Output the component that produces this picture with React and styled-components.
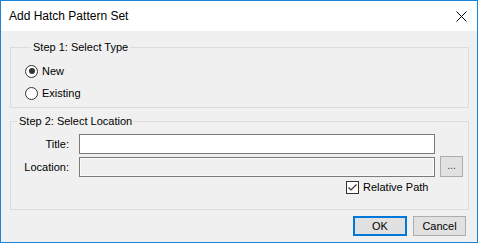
import React from "react";
import styled, { createGlobalStyle } from "styled-components";

const Global = createGlobalStyle`
  html, body { margin: 0; padding: 0; background: #ffffff; }
  * { box-sizing: border-box; }
`;

const Window = styled.div`
  width: 478px;
  height: 243px;
  border: 1px solid #1a84d8;
  background: #f0f0f0;
  display: flex;
  flex-direction: column;
  font-family: "Liberation Sans", Arial, sans-serif;
  font-size: 11px;
  color: #000;
`;

const TitleBar = styled.div`
  height: 30px;
  flex: none;
  background: #ffffff;
  display: flex;
  align-items: center;
  justify-content: space-between;
  padding: 0 10px 0 8px;
`;

const TitleText = styled.div`
  font-family: "Liberation Sans", Arial, sans-serif;
  font-size: 12px;
  color: #000;
`;

const CloseIcon = styled.svg`
  width: 11px;
  height: 11px;
  display: block;
`;

const Body = styled.div`
  flex: 1;
  display: flex;
  flex-direction: column;
  padding: 10px 8px 7px 9px;
`;

const Group = styled.fieldset`
  margin: ${(p) => (p.$first ? "0" : "7px 0 0 0")};
  border: 1px solid #dcdcdc;
  padding: ${(p) => p.$pad};
  min-width: 0;
`;

const Legend = styled.legend`
  margin-left: 6px;
  padding: 0 2px;
  font-size: 11px;
  line-height: 13px;
`;

const RadioRow = styled.label`
  height: 22px;
  display: flex;
  align-items: center;
  gap: 4px;
`;

const RadioCircle = styled.span`
  width: 13px;
  height: 13px;
  border: 1px solid #333;
  border-radius: 50%;
  background: #fff;
  display: flex;
  align-items: center;
  justify-content: center;
  &::after {
    content: "";
    width: 6px;
    height: 6px;
    border-radius: 50%;
    background: ${(p) => (p.$checked ? "#333" : "transparent")};
  }
`;

const FormGrid = styled.div`
  display: grid;
  grid-template-columns: 68px 1fr 23px;
  row-gap: 3px;
  align-items: center;
`;

const FieldLabel = styled.div`
  text-align: right;
  margin-right: 10px;
`;

const TextInput = styled.div`
  height: 20px;
  margin-right: 5px;
  border: 1px solid #7a7a7a;
  background: ${(p) => (p.$disabled ? "#f0f0f0" : "#fff")};
  box-shadow: ${(p) => (p.$disabled ? "inset 0 0 0 1px #fafafa" : "none")};
`;

const BrowseButton = styled.div`
  height: 21px;
  margin-top: -1px;
  border: 1px solid #adadad;
  background: #e1e1e1;
  display: flex;
  align-items: center;
  justify-content: center;
  font-size: 10px;
  padding-bottom: 2px;
  color: #333;
`;

const CheckRow = styled.label`
  grid-column: 2 / 4;
  display: flex;
  align-items: center;
  gap: 4px;
  height: 16px;
  margin-top: -1px;
  padding-left: 267px;
`;

const CheckBox = styled.span`
  width: 13px;
  height: 13px;
  border: 1px solid #333;
  background: #fff;
  display: flex;
  align-items: center;
  justify-content: center;
`;

const ButtonRow = styled.div`
  margin-top: 6px;
  display: flex;
  justify-content: flex-end;
  gap: 6px;
  padding-right: 3px;
`;

const Button = styled.div`
  width: ${(p) => (p.$primary ? "54px" : "53px")};
  height: 20px;
  border: ${(p) => (p.$primary ? "2px solid #0078d7" : "1px solid #adadad")};
  background: #e1e1e1;
  display: flex;
  align-items: center;
  justify-content: center;
  font-size: 11px;
`;

export default function App() {
  return (
    <>
      <Global />
      <Window>
        <TitleBar>
          <TitleText>Add Hatch Pattern Set</TitleText>
          <CloseIcon viewBox="0 0 11 11">
            <path d="M0.5 0.5 L10.5 10.5 M10.5 0.5 L0.5 10.5" stroke="#000" strokeWidth="1" fill="none" />
          </CloseIcon>
        </TitleBar>
        <Body>
          <Group $first $pad="6px 0 3px 14px">
            <Legend>Step 1: Select Type</Legend>
            <RadioRow>
              <RadioCircle $checked />
              <span>New</span>
            </RadioRow>
            <RadioRow>
              <RadioCircle />
              <span>Existing</span>
            </RadioRow>
          </Group>
          <Group $pad="6px 5px 14px 0">
            <Legend>Step 2: Select Location</Legend>
            <FormGrid>
              <FieldLabel>Title:</FieldLabel>
              <TextInput />
              <span />
              <FieldLabel>Location:</FieldLabel>
              <TextInput $disabled />
              <BrowseButton>...</BrowseButton>
              <CheckRow>
                <CheckBox>
                  <svg width="11" height="11" viewBox="0 0 11 11">
                    <path d="M1.5 5.5 L4 8 L9.5 2.5" stroke="#333" strokeWidth="1.2" fill="none" />
                  </svg>
                </CheckBox>
                <span>Relative Path</span>
              </CheckRow>
            </FormGrid>
          </Group>
          <ButtonRow>
            <Button $primary>OK</Button>
            <Button>Cancel</Button>
          </ButtonRow>
        </Body>
      </Window>
    </>
  );
}
